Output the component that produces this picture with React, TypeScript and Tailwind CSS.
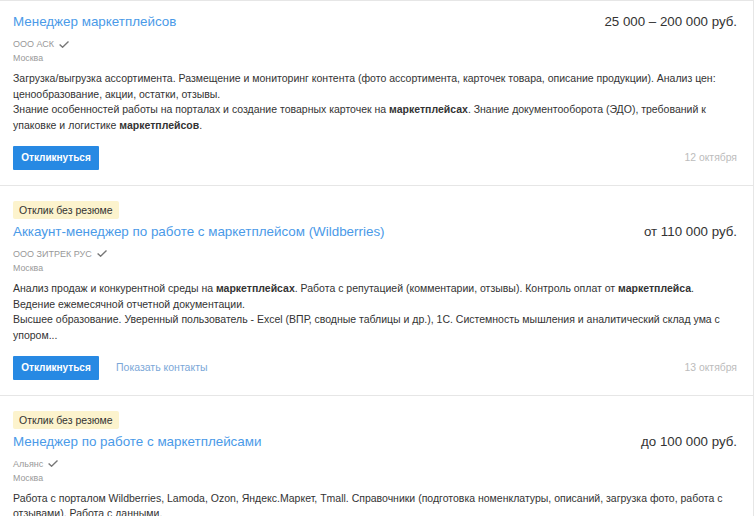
import type { ReactNode } from "react";

type Vacancy = {
  title: string;
  salary: string;
  company: string;
  city: string;
  noResume?: boolean;
  showContacts?: boolean;
  date?: string;
  blocks: ReactNode[];
};

const vacancies: Vacancy[] = [
  {
    title: "Менеджер маркетплейсов",
    salary: "25 000 – 200 000 руб.",
    company: "ООО АСК",
    city: "Москва",
    date: "12 октября",
    blocks: [
      <>
        Загрузка/выгрузка ассортимента. Размещение и мониторинг контента (фото
        ассортимента, карточек товара, описание продукции). Анализ цен:
        <br />
        ценообразование, акции, остатки, отзывы.
      </>,
      <>
        Знание особенностей работы на порталах и создание товарных карточек на{" "}
        <b>маркетплейсах</b>. Знание документооборота (ЭДО), требований к
        <br />
        упаковке и логистике <b>маркетплейсов</b>.
      </>,
    ],
  },
  {
    title: "Аккаунт-менеджер по работе с маркетплейсом (Wildberries)",
    salary: "от 110 000 руб.",
    company: "ООО ЗИТРЕК РУС",
    city: "Москва",
    noResume: true,
    showContacts: true,
    date: "13 октября",
    blocks: [
      <>
        Анализ продаж и конкурентной среды на <b>маркетплейсах</b>. Работа с
        репутацией (комментарии, отзывы). Контроль оплат от{" "}
        <b>маркетплейса</b>.
        <br />
        Ведение ежемесячной отчетной документации.
      </>,
      <>
        Высшее образование. Уверенный пользователь - Excel (ВПР, сводные таблицы
        и др.), 1С. Системность мышления и аналитический склад ума с
        <br />
        упором...
      </>,
    ],
  },
  {
    title: "Менеджер по работе с маркетплейсами",
    salary: "до 100 000 руб.",
    company: "Альянс",
    city: "Москва",
    noResume: true,
    blocks: [
      <>
        Работа с порталом Wildberries, Lamoda, Ozon, Яндекс.Маркет, Tmall.
        Справочники (подготовка номенклатуры, описаний, загрузка фото, работа с
        <br />
        отзывами). Работа с данными.
      </>,
    ],
  },
];

function Verified() {
  return (
    <svg
      viewBox="0 0 10 7"
      className="ml-[5px] h-[7px] w-[10px]"
      fill="none"
      stroke="#777"
      strokeWidth="1.4"
    >
      <path d="M0.6 3.4 3.6 6.2 9.5 0.6" />
    </svg>
  );
}

function Card({ v, first }: { v: Vacancy; first: boolean }) {
  return (
    <div
      className={`border-b border-[#e6e6e6] pl-[13px] pr-[16px] pb-[15px] ${
        first ? "pt-[11px]" : "pt-[15px]"
      }`}
    >
      {v.noResume && (
        <div className="mb-[3px] h-[18px] w-fit rounded-[2px] bg-[#fcf3cd] px-[6px] text-[10.5px] leading-[18px] text-[#333]">
          Отклик без резюме
        </div>
      )}
      <div className="flex items-start justify-between gap-4">
        <a className="cursor-pointer text-[13.4px] leading-[20px] text-[#4a9ae8]">
          {v.title}
        </a>
        <div className="whitespace-nowrap text-[13.3px] leading-[20px] text-[#333]">
          {v.salary}
        </div>
      </div>
      <div className="mt-[5px] flex items-center text-[9px] leading-[14px] text-[#999]">
        {v.company}
        <Verified />
      </div>
      <div className="text-[8.8px] leading-[14px] text-[#999]">{v.city}</div>
      <div className="mt-[6px] text-[10.5px] leading-[15.7px] text-[#333] [&_b]:font-bold">
        {v.blocks.map((b, i) => (
          <div key={i}>{b}</div>
        ))}
      </div>
      {v.date && (
        <div className="mt-[12px] flex items-center">
          <button className="h-[24px] w-[86px] rounded-[1px] bg-[#2789e3] text-[10px] font-bold text-white">
            Откликнуться
          </button>
          {v.showContacts && (
            <a className="ml-[17px] cursor-pointer text-[10.5px] text-[#7ba7d8]">
              Показать контакты
            </a>
          )}
          <div className="ml-auto text-[10.4px] text-[#bcbcbc]">{v.date}</div>
        </div>
      )}
    </div>
  );
}

export default function App() {
  return (
    <div className="h-[516px] overflow-hidden bg-white font-[family-name:Liberation_Sans,Arial,sans-serif]">
      <div className="w-[754px] border-t border-r border-[#e6e6e6]">
        {vacancies.map((v, i) => (
          <Card key={v.title} v={v} first={i === 0} />
        ))}
      </div>
    </div>
  );
}
